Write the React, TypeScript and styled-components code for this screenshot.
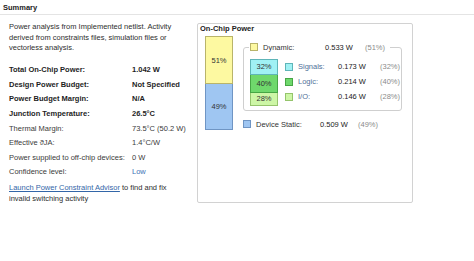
import React from "react";
import styled, { createGlobalStyle } from "styled-components";

const GlobalStyle = createGlobalStyle`
  html, body {
    margin: 0;
    padding: 0;
    background: #ffffff;
  }
  body {
    font-family: "Liberation Sans", Arial, sans-serif;
    font-size: 7.5px;
    color: #2e2e2e;
  }
`;

const Page = styled.div`
  width: 474px;
  height: 261px;
  overflow: hidden;
`;

const Header = styled.div`
  height: 14px;
  padding-left: 3px;
  display: flex;
  align-items: center;
  font-weight: 700;
  color: #222;
  border-bottom: 1px solid #e4e4e4;
`;

const Content = styled.div`
  display: flex;
  align-items: flex-start;
  padding-top: 7px;
`;

const Left = styled.div`
  width: 188px;
  padding-left: 9px;
`;

const Description = styled.p`
  margin: 0 0 9px 0;
  line-height: 10.5px;
  width: 180px;
`;

const Facts = styled.div`
  display: grid;
  grid-template-columns: 123px auto;
  grid-auto-rows: 14.6px;
  align-items: center;
`;

const Cell = styled.div<{ $strong?: boolean; $link?: boolean }>`
  font-weight: ${(p) => (p.$strong ? 700 : 400)};
  color: ${(p) => (p.$link ? "#3a72b6" : p.$strong ? "#1e1e1e" : "#3a3a3a")};
  white-space: nowrap;
`;

const Advisor = styled.p`
  margin: 4px 0 0 0;
  line-height: 10.5px;
  width: 168px;
`;

const Link = styled.a`
  display: inline-block;
  color: #3366a8;
  text-decoration: underline;
`;

const Box = styled.div`
  width: 214px;
  height: 178px;
  border: 1px solid #d2d2d2;
  border-radius: 2px;
  margin-top: 1px;
`;

const BoxTitle = styled.div`
  font-weight: 700;
  color: #222;
  padding: 0 0 0 2px;
  height: 11px;
  line-height: 10px;
`;

const ChartRow = styled.div`
  display: flex;
  align-items: flex-start;
  padding: 1px 0 0 7px;
`;

const Stack = styled.div<{ $height: number }>`
  width: 28px;
  height: ${(p) => p.$height}px;
  display: flex;
  flex-direction: column;
`;

const Segment = styled.div<{ $bg: string; $edge: string }>`
  background: ${(p) => p.$bg};
  border: 1px solid ${(p) => p.$edge};
  box-sizing: border-box;
  display: flex;
  align-items: center;
  justify-content: center;
  color: #333;
  & + & {
    border-top: none;
  }
`;

const Breakdown = styled.div`
  margin-left: 10px;
  margin-top: 6px;
`;

const Group = styled.fieldset`
  margin: 0;
  width: 159px;
  box-sizing: border-box;
  padding: 7px 0 4px 6px;
  border: 1px solid #cfcfcf;
  border-radius: 3px;
  display: flex;
  align-items: flex-start;
`;

const GroupLegend = styled.legend`
  padding: 0 5px 0 1px;
  margin-left: -1px;
`;

const Legend = styled.div<{ $cols: string; $row?: number }>`
  display: grid;
  grid-template-columns: ${(p) => p.$cols};
  grid-auto-rows: ${(p) => p.$row ?? 10}px;
  align-items: center;
  white-space: nowrap;
`;

const Swatch = styled.span<{ $bg: string; $edge: string }>`
  width: 8px;
  height: 8px;
  box-sizing: border-box;
  background: ${(p) => p.$bg};
  border: 1px solid ${(p) => p.$edge};
`;

const Name = styled.span<{ $tone?: boolean }>`
  padding-left: 5px;
  color: ${(p) => (p.$tone ? "#4f7099" : "#333")};
`;

const Value = styled.span`
  color: #222;
`;

const Pct = styled.span`
  color: #8a8a8a;
`;

const Parts = styled.div`
  margin-left: 7px;
`;

const Static = styled.div`
  margin-top: 8px;
`;

const colors = {
  dynamic: ["#fdf9a1", "#b9b46a"],
  static: ["#9fc6f2", "#6f95c4"],
  signals: ["#a0f1f4", "#5fb5b8"],
  logic: ["#6fd86c", "#47a645"],
  io: ["#cdf6a6", "#95c46c"],
};

const facts: [string, string, boolean, boolean?][] = [
  ["Total On-Chip Power:", "1.042 W", true],
  ["Design Power Budget:", "Not Specified", true],
  ["Power Budget Margin:", "N/A", true],
  ["Junction Temperature:", "26.5°C", true],
  ["Thermal Margin:", "73.5°C (50.2 W)", false],
  ["Effective \u03D1JA:", "1.4°C/W", false],
  ["Power supplied to off-chip devices:", "0 W", false],
  ["Confidence level:", "Low", false, true],
];

const parts = [
  { name: "Signals:", value: "0.173 W", pct: 32, c: colors.signals },
  { name: "Logic:", value: "0.214 W", pct: 40, c: colors.logic },
  { name: "I/O:", value: "0.146 W", pct: 28, c: colors.io },
];

export default function App() {
  return (
    <Page>
      <GlobalStyle />
      <Header>Summary</Header>
      <Content>
        <Left>
          <Description>
            Power analysis from Implemented netlist. Activity derived from constraints files, simulation files or
            vectorless analysis.
          </Description>
          <Facts>
            {facts.map(([label, value, strong, link]) => (
              <React.Fragment key={label}>
                <Cell $strong={strong}>{label}</Cell>
                <Cell $strong={strong} $link={link}>
                  {value}
                </Cell>
              </React.Fragment>
            ))}
          </Facts>
          <Advisor>
            <Link>Launch Power Constraint Advisor</Link> to find and fix invalid switching activity
          </Advisor>
        </Left>
        <Box>
          <BoxTitle>On-Chip Power</BoxTitle>
          <ChartRow>
            <Stack $height={94}>
              <Segment $bg={colors.dynamic[0]} $edge={colors.dynamic[1]} style={{ flex: 51 }}>
                51%
              </Segment>
              <Segment $bg={colors.static[0]} $edge={colors.static[1]} style={{ flex: 49 }}>
                49%
              </Segment>
            </Stack>
            <Breakdown>
              <Group>
                <GroupLegend>
                  <Legend $cols="8px 67px 40px auto">
                    <Swatch $bg={colors.dynamic[0]} $edge={colors.dynamic[1]} />
                    <Name>Dynamic:</Name>
                    <Value>0.533 W</Value>
                    <Pct>(51%)</Pct>
                  </Legend>
                </GroupLegend>
                <Stack $height={47}>
                  {parts.map((p) => (
                    <Segment key={p.name} $bg={p.c[0]} $edge={p.c[1]} style={{ flex: p.pct }}>
                      {p.pct}%
                    </Segment>
                  ))}
                </Stack>
                <Parts>
                  <Legend $cols="8px 45px 42px auto" $row={15}>
                    {parts.map((p) => (
                      <React.Fragment key={p.name}>
                        <Swatch $bg={p.c[0]} $edge={p.c[1]} />
                        <Name $tone>{p.name}</Name>
                        <Value>{p.value}</Value>
                        <Pct>({p.pct}%)</Pct>
                      </React.Fragment>
                    ))}
                  </Legend>
                </Parts>
              </Group>
              <Static>
                <Legend $cols="8px 69px 38px auto">
                  <Swatch $bg={colors.static[0]} $edge={colors.static[1]} />
                  <Name>Device Static:</Name>
                  <Value>0.509 W</Value>
                  <Pct>(49%)</Pct>
                </Legend>
              </Static>
            </Breakdown>
          </ChartRow>
        </Box>
      </Content>
    </Page>
  );
}
